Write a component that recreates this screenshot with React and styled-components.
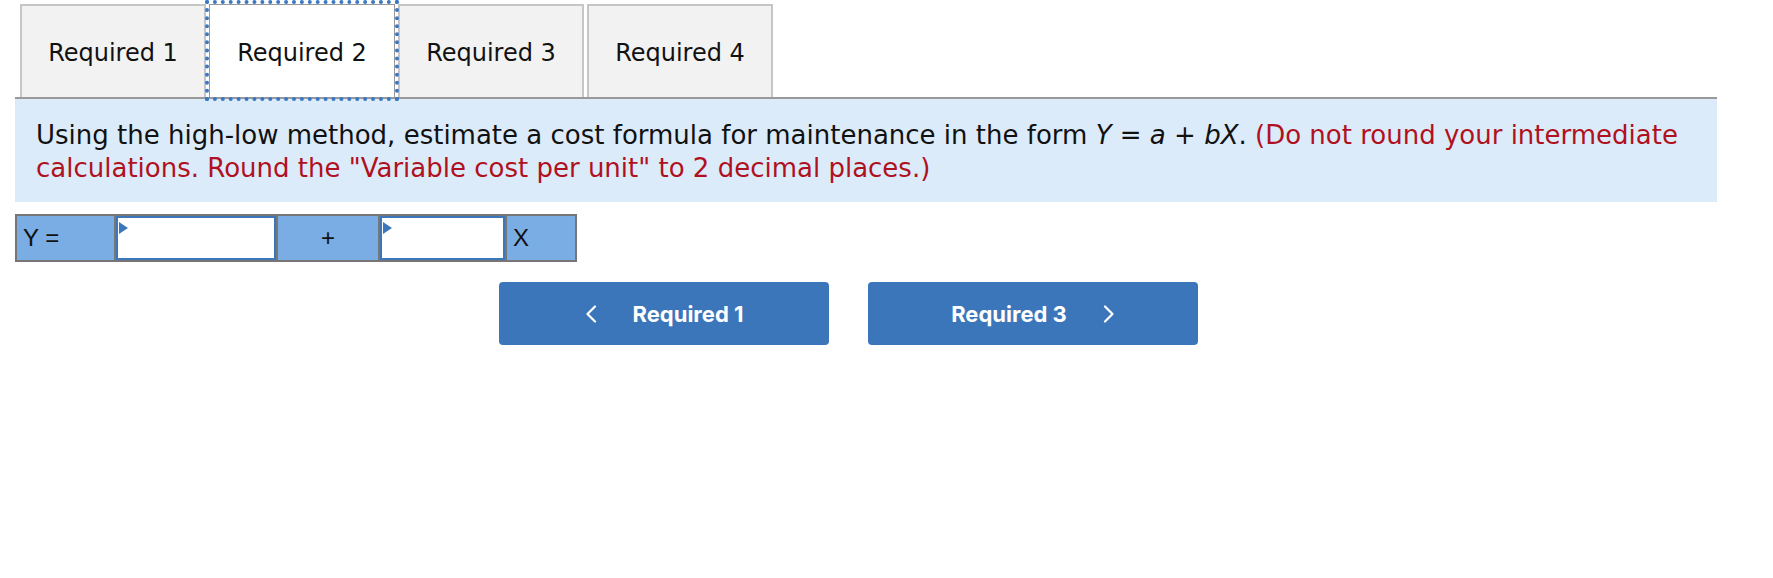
import styled, { createGlobalStyle, css } from 'styled-components'

const GlobalStyle = createGlobalStyle`
  body {
    margin: 0;
    background: #fff;
    font-family: 'DejaVu Sans', Verdana, sans-serif;
    color: #000;
  }
`

const Page = styled.div`
  padding: 0 56px 0 15px;
`

const TabList = styled.div`
  display: flex;
  gap: 3px;
  padding: 4px 0 0 5px;
  border-bottom: 2px solid #999;
`

const Tab = styled.div`
  box-sizing: border-box;
  width: 186px;
  height: 93px;
  padding-top: 3px;
  display: flex;
  align-items: center;
  justify-content: center;
  background: #f2f2f2;
  border: 2px solid #c6c6c6;
  border-bottom: none;
  font-size: 24px;
  color: #111;

  ${p =>
    p.active &&
    css`
      position: relative;
      background: #fff;
      border: 1px solid #9a9a9a;
      border-bottom: none;
      outline: 4px dotted #3b78c2;
      outline-offset: 0;
    `}
`

const Instructions = styled.div`
  background: #dcebf9;
  padding: 20px 8px 17px 21px;
  font-size: 26px;
  line-height: 33px;
  color: #111;
`

const Note = styled.span`
  color: #b0111e;
`

const FormulaRow = styled.div`
  display: inline-grid;
  grid-template-columns: 97px 160px 100px 125px 68px;
  height: 48px;
  box-sizing: border-box;
  gap: 2px;
  padding: 2px;
  margin-top: 12px;
  background: #767676;
  font-family: 'Liberation Sans', Arial, sans-serif;
  font-size: 24px;
  color: #111;
`

const Cell = styled.div`
  background: #7aade3;
  display: flex;
  align-items: center;
  justify-content: ${p => (p.center ? 'center' : 'flex-start')};
  padding-left: ${p => (p.center ? '0' : '6px')};
`

const InputCell = styled.div`
  position: relative;
  background: #fff;
  border: 2px solid #3d77bb;
`

const Flag = styled.span`
  position: absolute;
  left: 1px;
  top: 4px;
  width: 0;
  height: 0;
  border-top: 6px solid transparent;
  border-bottom: 6px solid transparent;
  border-left: 9px solid #3d77bb;
`

const Nav = styled.div`
  display: flex;
  gap: 39px;
  padding-left: 484px;
  margin-top: 20px;
`

const NavButton = styled.button`
  width: 330px;
  height: 63px;
  border: none;
  border-radius: 4px;
  background: #3c76ba;
  color: #fff;
  font-family: Inter, Roboto, 'Liberation Sans', sans-serif;
  font-weight: 700;
  font-size: 22px;
  display: flex;
  align-items: center;
  justify-content: center;
  gap: 36px;
  cursor: pointer;
`

const Chevron = ({ dir }) => (
  <svg width="12" height="18" viewBox="0 0 12 18" fill="none">
    <path
      d={dir === 'left' ? 'M10 1.5 L2.5 9 L10 16.5' : 'M2 1.5 L9.5 9 L2 16.5'}
      stroke="#fff"
      strokeWidth="2.2"
      strokeLinecap="round"
      strokeLinejoin="round"
    />
  </svg>
)

const App = () => (
  <Page>
    <GlobalStyle />
    <TabList>
      <Tab>Required 1</Tab>
      <Tab active>Required 2</Tab>
      <Tab>Required 3</Tab>
      <Tab>Required 4</Tab>
    </TabList>
    <Instructions>
      Using the high-low method, estimate a cost formula for maintenance in the
      form <i>Y</i> = <i>a</i> + <i>bX</i>.{' '}
      <Note>
        (Do not round your intermediate calculations. Round the "Variable cost
        per unit" to 2 decimal places.)
      </Note>
    </Instructions>
    <FormulaRow>
      <Cell>Y =</Cell>
      <InputCell>
        <Flag />
      </InputCell>
      <Cell center>+</Cell>
      <InputCell>
        <Flag />
      </InputCell>
      <Cell>X</Cell>
    </FormulaRow>
    <Nav>
      <NavButton>
        <Chevron dir="left" />
        Required 1
      </NavButton>
      <NavButton>
        Required 3
        <Chevron dir="right" />
      </NavButton>
    </Nav>
  </Page>
)

export default App
